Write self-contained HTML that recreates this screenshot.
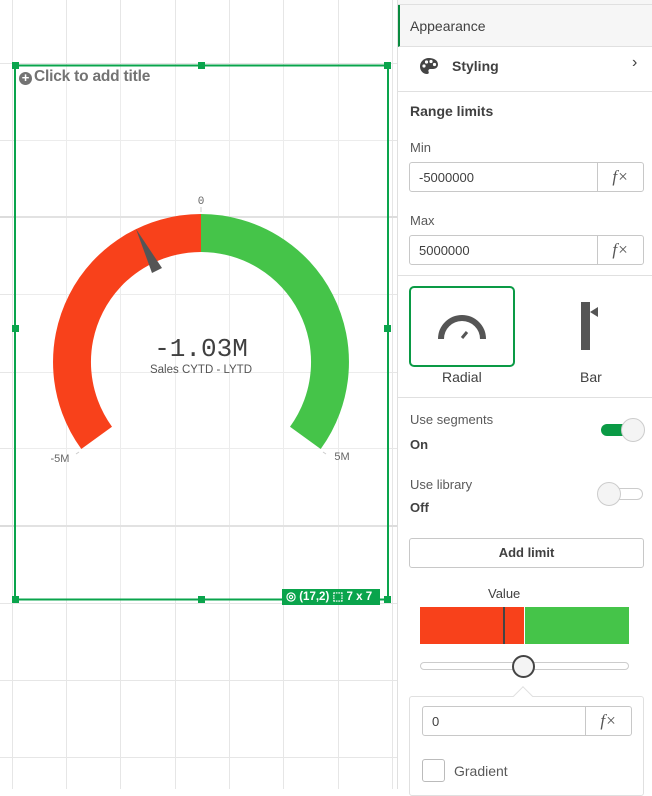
<!DOCTYPE html>
<html><head><style>
*{margin:0;padding:0;box-sizing:border-box}
body{width:652px;height:789px;position:relative;overflow:hidden;background:#fff;font-family:"Liberation Sans",sans-serif;color:#404040}
.a{position:absolute}
.inp{position:absolute;border:1px solid #c8c8c8;border-radius:3px;background:#fff;font-size:13px;color:#404040}
.inp span{position:absolute;left:9px;top:7px}
.inp i{position:absolute;right:0;top:0;bottom:0;width:46px;border-left:1px solid #c8c8c8;font-style:italic;font-family:"Liberation Serif",serif;font-size:17px;text-align:center;line-height:28px;color:#555}
.lbl{position:absolute;font-size:13px;color:#595959}
.h{position:absolute;width:7px;height:7px;background:#0aa44c}
</style></head><body>
<svg class="a" style="left:0;top:0" width="397" height="789">
<g stroke="#e6e6e6" stroke-width="1">
<line x1="12.5" y1="0" x2="12.5" y2="789"/><line x1="66.5" y1="0" x2="66.5" y2="789"/><line x1="120.5" y1="0" x2="120.5" y2="789"/><line x1="175.5" y1="0" x2="175.5" y2="789"/><line x1="229.5" y1="0" x2="229.5" y2="789"/><line x1="283.5" y1="0" x2="283.5" y2="789"/><line x1="338.5" y1="0" x2="338.5" y2="789"/><line x1="392.5" y1="0" x2="392.5" y2="789"/>
<line x1="0" y1="63.5" x2="397" y2="63.5"/><line x1="0" y1="140.5" x2="397" y2="140.5"/><line x1="0" y1="294.5" x2="397" y2="294.5"/><line x1="0" y1="372.5" x2="397" y2="372.5"/><line x1="0" y1="448.5" x2="397" y2="448.5"/><line x1="0" y1="603.5" x2="397" y2="603.5"/><line x1="0" y1="680.5" x2="397" y2="680.5"/><line x1="0" y1="757.5" x2="397" y2="757.5"/>
</g>
<g stroke="#dcdcdc" stroke-width="2"><line x1="0" y1="217" x2="397" y2="217"/><line x1="0" y1="526" x2="397" y2="526"/></g>
<rect x="15" y="65" width="373" height="535" fill="#fff"/>
<g stroke="#ececec" stroke-width="1">
<line x1="66.5" y1="65" x2="66.5" y2="600"/><line x1="120.5" y1="65" x2="120.5" y2="600"/><line x1="175.5" y1="65" x2="175.5" y2="600"/><line x1="229.5" y1="65" x2="229.5" y2="600"/><line x1="283.5" y1="65" x2="283.5" y2="600"/><line x1="338.5" y1="65" x2="338.5" y2="600"/>
<line x1="15" y1="140.5" x2="388" y2="140.5"/><line x1="15" y1="294.5" x2="388" y2="294.5"/><line x1="15" y1="372.5" x2="388" y2="372.5"/><line x1="15" y1="448.5" x2="388" y2="448.5"/>
</g>
<g stroke="#e2e2e2" stroke-width="2"><line x1="15" y1="217" x2="388" y2="217"/><line x1="15" y1="526" x2="388" y2="526"/></g>
<path d="M81.3 449 A148 148 0 0 1 201 214 L201 252 A110 110 0 0 0 112 426.7 Z" fill="#f8411b"/>
<path d="M201 214 A148 148 0 0 1 320.7 449 L290 426.7 A110 110 0 0 0 201 252 Z" fill="#45c449"/>
<polygon points="136,229 162,268 152,273" fill="#555"/>
<line x1="201" y1="207" x2="201" y2="212" stroke="#ccc"/>
<line x1="79" y1="452" x2="76" y2="454" stroke="#ccc"/><line x1="323" y1="452" x2="326" y2="454" stroke="#ccc"/>
<text x="201" y="204" font-family="Liberation Mono,monospace" font-size="11" fill="#666" text-anchor="middle">0</text>
<text x="60" y="462" font-family="Liberation Sans" font-size="11" fill="#666" text-anchor="middle">-5M</text>
<text x="342" y="460" font-family="Liberation Sans" font-size="11" fill="#666" text-anchor="middle">5M</text>
<text x="201" y="356" font-family="Liberation Mono,monospace" font-size="26" fill="#404040" text-anchor="middle">-1.03M</text>
<text x="201" y="373" font-family="Liberation Sans" font-size="11.5" fill="#555" text-anchor="middle">Sales CYTD - LYTD</text>
<rect x="15" y="65.5" width="373" height="534" fill="none" stroke="#0aa44c" stroke-width="2"/>
</svg>
<div class="h" style="left:12px;top:62px"></div><div class="h" style="left:198px;top:62px"></div><div class="h" style="left:384px;top:62px"></div>
<div class="h" style="left:12px;top:325px"></div><div class="h" style="left:384px;top:325px"></div>
<div class="h" style="left:12px;top:596px"></div><div class="h" style="left:198px;top:596px"></div><div class="h" style="left:384px;top:596px"></div>
<div class="a" style="left:19px;top:68px;font-size:15.5px;font-weight:bold;color:#737373;letter-spacing:-0.2px"><span style="display:inline-block;width:13px;height:13px;border-radius:50%;background:#737373;color:#fff;font-size:13px;line-height:12px;text-align:center;vertical-align:-1px;margin-right:2px">+</span>Click to add title</div>
<div class="a" style="left:282px;top:589px;width:98px;height:16px;background:#0aa44c;color:#fff;font-size:11.5px;font-weight:bold;line-height:16px;padding-left:4px">◎ (17,2) ⬚ 7 x 7</div>

<div class="a" style="left:397px;top:0;width:255px;height:789px;border-left:1px solid #e0e0e0;background:#fff"></div>
<div class="a" style="left:398px;top:0;width:254px;height:5px;background:#f6f6f6;border-bottom:1px solid #e0e0e0"></div>
<div class="a" style="left:398px;top:5px;width:254px;height:42px;background:#f6f6f6;border-left:2px solid #0a8a3f;border-bottom:1px solid #e0e0e0;font-size:14px;color:#404040;padding:13px 0 0 10px">Appearance</div>
<div class="a" style="left:398px;top:47px;width:254px;height:45px;border-bottom:1px solid #e0e0e0;font-size:14px;font-weight:bold;color:#404040">
<svg class="a" style="left:21px;top:10px" width="20" height="18"><path d="M10 1 C4.5 1 1 5 1 9.5 C1 14 4.5 17 8 17 C10 17 10 15.5 9.5 14.5 C9 13 10 12 11.5 12 L14 12 C17 12 19 10 19 7.5 C19 3.5 15 1 10 1 Z" fill="#444"/><circle cx="5" cy="9" r="1.6" fill="#fff"/><circle cx="7.5" cy="5" r="1.6" fill="#fff"/><circle cx="12" cy="4.5" r="1.6" fill="#fff"/><circle cx="15.5" cy="7.5" r="1.6" fill="#fff"/></svg>
<span class="a" style="left:54px;top:11px">Styling</span><span class="a" style="left:234px;top:7px;font-size:16px;font-weight:normal">›</span></div>
<div class="a" style="left:410px;top:103px;font-size:14px;font-weight:bold;color:#404040">Range limits</div>
<div class="lbl" style="left:410px;top:140px">Min</div>
<div class="inp" style="left:409px;top:162px;width:235px;height:30px"><span>-5000000</span><i>f×</i></div>
<div class="lbl" style="left:410px;top:213px">Max</div>
<div class="inp" style="left:409px;top:235px;width:235px;height:30px"><span>5000000</span><i>f×</i></div>
<div class="a" style="left:398px;top:275px;width:254px;height:1px;background:#e0e0e0"></div>
<div class="a" style="left:409px;top:286px;width:106px;height:81px;border:2px solid #0a9a45;border-radius:5px"></div>
<svg class="a" style="left:437px;top:312px" width="50" height="30"><path d="M4 27 A21 21 0 0 1 46 27" fill="none" stroke="#555" stroke-width="6"/><line x1="25" y1="26" x2="30" y2="20" stroke="#555" stroke-width="3"/></svg>
<div class="a" style="left:581px;top:302px;width:9px;height:48px;background:#555"></div>
<div class="a" style="left:590px;top:307px;width:0;height:0;border-top:5px solid transparent;border-bottom:5px solid transparent;border-right:8px solid #555"></div>
<div class="lbl" style="left:442px;top:369px;font-size:14px;color:#404040">Radial</div>
<div class="lbl" style="left:580px;top:369px;font-size:14px;color:#404040">Bar</div>
<div class="a" style="left:398px;top:397px;width:254px;height:1px;background:#e0e0e0"></div>
<div class="lbl" style="left:410px;top:412px">Use segments</div>
<div class="a" style="left:410px;top:437px;font-size:13px;font-weight:bold;color:#404040">On</div>
<div class="a" style="left:601px;top:424px;width:42px;height:12px;border-radius:6px;background:#0a9a45"></div>
<div class="a" style="left:621px;top:418px;width:24px;height:24px;border-radius:50%;background:#f4f4f4;border:1px solid #ccc"></div>
<div class="lbl" style="left:410px;top:477px">Use library</div>
<div class="a" style="left:410px;top:500px;font-size:13px;font-weight:bold;color:#404040">Off</div>
<div class="a" style="left:601px;top:488px;width:42px;height:12px;border-radius:6px;background:#fff;border:1px solid #ccc"></div>
<div class="a" style="left:597px;top:482px;width:24px;height:24px;border-radius:50%;background:#f4f4f4;border:1px solid #ccc"></div>
<div class="a" style="left:409px;top:538px;width:235px;height:30px;border:1px solid #c8c8c8;border-radius:3px;font-size:13px;font-weight:bold;text-align:center;line-height:28px">Add limit</div>
<div class="lbl" style="left:488px;top:586px;color:#404040">Value</div>
<div class="a" style="left:420px;top:607px;width:84px;height:37px;background:#f8411b"></div>
<div class="a" style="left:503px;top:607px;width:2px;height:37px;background:#444"></div>
<div class="a" style="left:505px;top:607px;width:19px;height:37px;background:#f8411b"></div>
<div class="a" style="left:525px;top:607px;width:104px;height:37px;background:#45c449"></div>
<div class="a" style="left:420px;top:662px;width:209px;height:8px;border:1px solid #ccc;border-radius:4px"></div>
<div class="a" style="left:512px;top:655px;width:23px;height:23px;border-radius:50%;background:#f4f4f4;border:2px solid #444"></div>
<div class="a" style="left:409px;top:696px;width:235px;height:100px;border:1px solid #e0e0e0;border-radius:3px"></div>
<div class="a" style="left:516px;top:689px;width:14px;height:14px;background:#fff;border-left:1px solid #e0e0e0;border-top:1px solid #e0e0e0;transform:rotate(45deg)"></div>
<div class="inp" style="left:422px;top:706px;width:210px;height:30px"><span>0</span><i>f×</i></div>
<div class="a" style="left:422px;top:759px;width:23px;height:23px;border:1px solid #bbb;border-radius:3px"></div>
<div class="lbl" style="left:454px;top:763px;font-size:14px">Gradient</div>
</body></html>
